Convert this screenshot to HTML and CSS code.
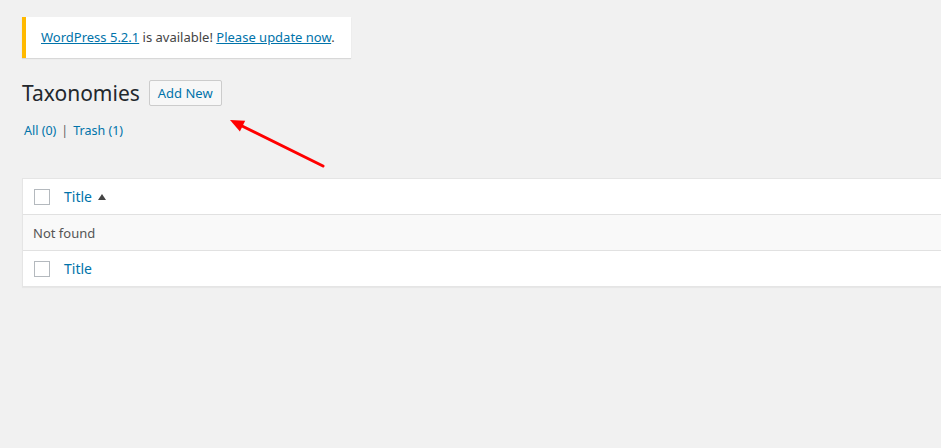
FILE: index.html
```html
<!DOCTYPE html>
<html lang="en">
<head>
<meta charset="utf-8">
<title>Taxonomies</title>
<link rel="stylesheet" href="styles.css">
</head>
<body>
<div class="wrap">
  <div class="notice">
    <p><a href="#">WordPress 5.2.1</a> is available! <a href="#">Please update now</a>.</p>
  </div>
  <div class="heading">
    <h1>Taxonomies</h1>
    <a class="btn" href="#">Add New</a>
  </div>
  <ul class="subsubsub">
    <li><a href="#">All (0)</a><span class="sep">|</span></li>
    <li><a href="#">Trash (1)</a></li>
  </ul>
  <table class="list">
    <thead>
      <tr><td class="cb"><span class="box"></span></td><th><a href="#">Title</a><span class="sort"></span></th></tr>
    </thead>
    <tbody>
      <tr class="empty"><td colspan="2">Not found</td></tr>
    </tbody>
    <tfoot>
      <tr><td class="cb"><span class="box"></span></td><th><a href="#">Title</a></th></tr>
    </tfoot>
  </table>
</div>
<svg class="arrow" width="120" height="70" viewBox="0 0 120 70">
  <line x1="103" y1="54" x2="20" y2="13" stroke="#ff0000" stroke-width="3" stroke-linecap="round"/>
  <polygon points="10,8 25.2,8.8 19.9,19.6" fill="#ff0000"/>
</svg>
</body>
</html>
```
FILE: styles.css
```css
html, body {
  margin: 0;
  padding: 0;
}
body {
  background: #f1f1f1;
  font-family: "Noto Sans", "Open Sans", sans-serif;
  font-size: 13px;
  color: #444;
  width: 941px;
  height: 448px;
  overflow: hidden;
  position: relative;
}
a {
  color: #0073aa;
}
.wrap {
  padding: 17px 0 0 22px;
}
.notice {
  width: fit-content;
  background: #fff;
  border-left: 4px solid #ffb900;
  box-shadow: 0 1px 1px rgba(0,0,0,0.1);
  padding: 0 16px 0 15px;
}
.notice p {
  margin: 0;
  padding: 12px 0;
  line-height: 17px;
}
.heading {
  display: flex;
  align-items: center;
  margin-top: 22px;
  height: 26px;
}
h1 {
  font-size: 21px;
  font-weight: 400;
  margin: 0;
  color: #23282d;
  line-height: 26px;
}
.btn {
  margin-left: 9px;
  display: inline-block;
  border: 1px solid #ccc;
  border-radius: 2px;
  background: #f7f7f7;
  color: #0073aa;
  text-decoration: none;
  padding: 0 8px;
  height: 24px;
  line-height: 24px;
  font-size: 13px;
  font-weight: 400;
}
.subsubsub {
  list-style: none;
  margin: 15px 0 0 2px;
  padding: 0;
  display: flex;
  font-size: 12.5px;
  line-height: 20px;
  color: #666;
}
.subsubsub a {
  text-decoration: none;
}
.sep {
  margin: 0 5px;
}
.list {
  margin-top: 37px;
  width: 940px;
  background: #fff;
  border: 1px solid #e5e5e5;
  box-shadow: 0 1px 1px rgba(0,0,0,0.04);
  border-spacing: 0;
}
.list td, .list th {
  text-align: left;
  font-weight: 400;
  font-size: 14px;
  height: 35px;
  padding: 0;
}
.list thead td, .list thead th {
  border-bottom: 1px solid #e1e1e1;
}
.list tfoot td, .list tfoot th {
  border-top: 1px solid #e1e1e1;
}
.list .cb {
  width: 30px;
  padding-left: 11px;
}
.list th a {
  text-decoration: none;
  color: #0073aa;
}
.box {
  display: block;
  width: 14px;
  height: 14px;
  border: 1px solid #b4b9be;
  background: #fff;
}
.sort {
  display: inline-block;
  width: 0;
  height: 0;
  margin-left: 6px;
  border-left: 4px solid transparent;
  border-right: 4px solid transparent;
  border-bottom: 6px solid #444;
  vertical-align: 2px;
}
.empty td {
  background: #f9f9f9;
  padding-left: 10px;
  font-size: 13px;
  color: #555;
}
.arrow {
  position: absolute;
  left: 220px;
  top: 112px;
}
```
